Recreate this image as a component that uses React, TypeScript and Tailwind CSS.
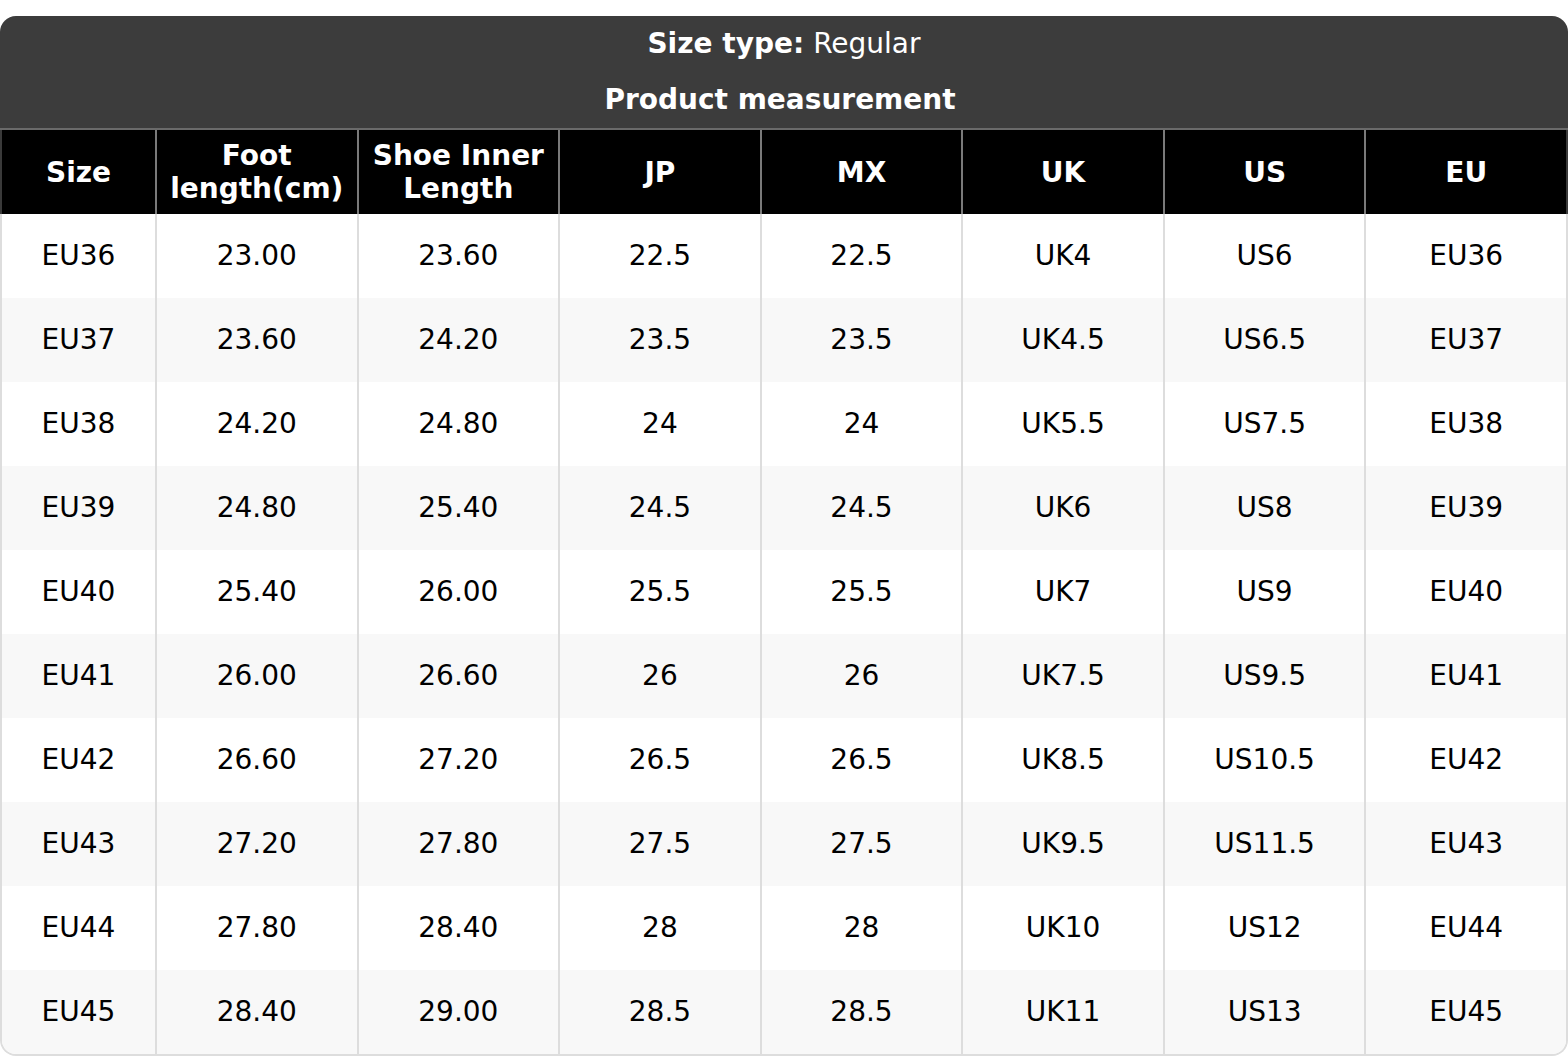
import React from 'react';

const columns = ['Size', 'Foot\nlength(cm)', 'Shoe Inner\nLength', 'JP', 'MX', 'UK', 'US', 'EU'];

const rows: string[][] = [
  ['EU36', '23.00', '23.60', '22.5', '22.5', 'UK4', 'US6', 'EU36'],
  ['EU37', '23.60', '24.20', '23.5', '23.5', 'UK4.5', 'US6.5', 'EU37'],
  ['EU38', '24.20', '24.80', '24', '24', 'UK5.5', 'US7.5', 'EU38'],
  ['EU39', '24.80', '25.40', '24.5', '24.5', 'UK6', 'US8', 'EU39'],
  ['EU40', '25.40', '26.00', '25.5', '25.5', 'UK7', 'US9', 'EU40'],
  ['EU41', '26.00', '26.60', '26', '26', 'UK7.5', 'US9.5', 'EU41'],
  ['EU42', '26.60', '27.20', '26.5', '26.5', 'UK8.5', 'US10.5', 'EU42'],
  ['EU43', '27.20', '27.80', '27.5', '27.5', 'UK9.5', 'US11.5', 'EU43'],
  ['EU44', '27.80', '28.40', '28', '28', 'UK10', 'US12', 'EU44'],
  ['EU45', '28.40', '29.00', '28.5', '28.5', 'UK11', 'US13', 'EU45'],
];

// first column is 155px incl. the 2px outer border
const gridCols = 'grid grid-cols-[153px_repeat(7,minmax(0,1fr))]';

export default function App() {
  return (
    <div className="bg-white pt-4 text-[28px]" style={{ fontFamily: '"DejaVu Sans", Verdana, sans-serif' }}>
      {/* Title block */}
      <div className="rounded-t-[16px] bg-[#3c3c3c] text-white text-center border-b-2 border-[#6a6a6a]">
        <div className="h-[56px] flex items-center justify-center">
          <span className="font-bold">Size type:</span>
          <span className="ml-[9px]">Regular</span>
        </div>
        <div className="h-[56px] flex items-center justify-center font-bold pr-[8px]">Product measurement</div>
      </div>

      {/* Column headers */}
      <div className={`${gridCols} bg-black text-white font-bold h-[84px] border-x-2 border-[#3a3a3a]`}>
        {columns.map((c, i) => (
          <div
            key={c}
            className={`flex items-center justify-center text-center leading-[33px] whitespace-pre-line ${i > 0 ? 'border-l-2 border-[#7a7a7a]' : ''}`}
          >
            {c}
          </div>
        ))}
      </div>

      {/* Body */}
      <div className="border-x-2 border-b-2 border-[#dddddd] rounded-b-[16px] overflow-hidden text-black">
        {rows.map((r, ri) => (
          <div key={r[0]} className={`${gridCols} h-[84px] ${ri % 2 === 1 ? 'bg-[#f8f8f8]' : 'bg-white'}`}>
            {r.map((v, ci) => (
              <div
                key={ci}
                className={`flex items-center justify-center ${ci > 0 ? 'border-l-2 border-[#dddddd]' : ''}`}
              >
                {v}
              </div>
            ))}
          </div>
        ))}
      </div>
    </div>
  );
}
